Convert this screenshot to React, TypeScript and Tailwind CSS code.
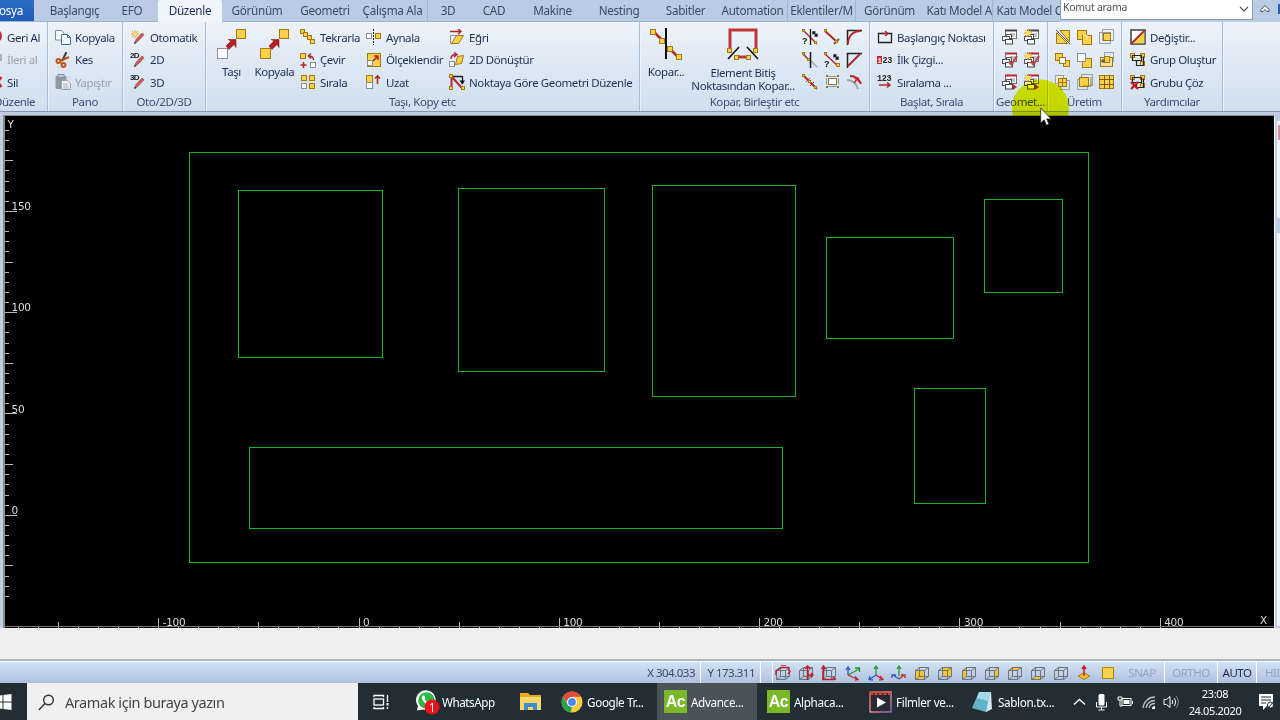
import type { ReactNode } from "react";
import clsx from "clsx";

interface Tab {
  label: string;
  width: number;
  active?: boolean;
  file?: boolean;
  divider?: boolean;
}

interface Box {
  x: number;
  y: number;
  w: number;
  h: number;
}

const TABS: Tab[] = [
  { label: "Dosya", width: 34, file: true },
  { label: "Başlangıç", width: 81 },
  { label: "EFO", width: 34 },
  { label: "", width: 9 },
  { label: "Düzenle", width: 64, active: true },
  { label: "Görünüm", width: 70 },
  { label: "Geometri", width: 66 },
  { label: "Çalışma Ala", width: 70, divider: true },
  { label: "3D", width: 40 },
  { label: "CAD", width: 52 },
  { label: "Makine", width: 65 },
  { label: "Nesting", width: 68 },
  { label: "Sabitler", width: 65 },
  { label: "Automation", width: 70, divider: true },
  { label: "Eklentiler/M", width: 68, divider: true },
  { label: "Görünüm", width: 67 },
  { label: "Katı Model A", width: 70, divider: true },
  { label: "Katı Model C", width: 67 },
];

const SHAPES: Box[] = [
  { x: 189, y: 152, w: 899, h: 410 },
  { x: 238, y: 190, w: 144, h: 167 },
  { x: 458, y: 188, w: 146, h: 183 },
  { x: 652, y: 185, w: 143, h: 211 },
  { x: 826, y: 237, w: 127, h: 101 },
  { x: 984, y: 199, w: 78, h: 93 },
  { x: 914, y: 388, w: 71, h: 115 },
  { x: 249, y: 447, w: 533, h: 81 },
];

const Y = "#fbd04a";
const YS = "#a5780f";
const R = "#b3262b";

function Icon({ size = 16, box = 16, className, children }: { size?: number; box?: number; className?: string; children: ReactNode }) {
  return (
    <svg width={size} height={size} viewBox={`0 0 ${box} ${box}`} className={clsx("shrink-0", className)} fill="none">
      {children}
    </svg>
  );
}

function Sq({ x, y, s = 5, h, fill = Y, stroke = YS }: { x: number; y: number; s?: number; h?: number; fill?: string; stroke?: string }) {
  return <rect x={x + 0.5} y={y + 0.5} width={s} height={h ?? s} fill={fill} stroke={stroke} />;
}

/* ---- edit / clipboard ---- */
const undoIcon = (
  <Icon>
    <circle cx="8" cy="7" r="7" fill="#d3222a" />
  </Icon>
);
const redoIcon = (
  <Icon>
    <path d="M14 2v6H6" stroke="#a9afb8" strokeWidth="2" />
  </Icon>
);
const deleteIcon = (
  <Icon>
    <path d="M14.500 3 11 8l3.500 5" stroke="#d3222a" strokeWidth="2.200" />
  </Icon>
);
const copyIcon = (
  <Icon>
    <path d="M.5 1.500h6l2.500 2.500v7H.5z" fill="#fff" stroke="#6d8db0" />
    <path d="M6.500 5.500h6l3 3v7h-9z" fill="#f4f9ff" stroke="#3f6f9f" />
    <path d="M12.500 5.500v3h3" stroke="#3f6f9f" />
  </Icon>
);
const cutIcon = (
  <Icon>
    <path d="M11.500 0 7 9" stroke="#4a3528" strokeWidth="2" />
    <path d="M14 5 5 9" stroke="#b4541f" strokeWidth="2" />
    <circle cx="3.500" cy="9" r="2" stroke="#c2541b" strokeWidth="2" />
    <circle cx="8.500" cy="13" r="2" stroke="#c2541b" strokeWidth="2" />
  </Icon>
);
const pasteIcon = (
  <Icon>
    <rect x=".5" y="2" width="11" height="13" rx="1" fill="#8f98a3" />
    <rect x="3" y=".5" width="6" height="3" fill="#c1c8d0" stroke="#8a929c" />
    <path d="M6.500 6.500h6l3 3v6h-9z" fill="#f0f3f7" stroke="#9aa2ac" />
    <path d="M8 10h5M8 12h6M8 14h6" stroke="#aab1ba" />
  </Icon>
);

function Pencil({ tag }: { tag?: string }) {
  return (
    <Icon className="overflow-visible">
      <path d="m4.500 14.500 1.500-4 6-6.500 2 1.800-6 6.500z" fill="#cf5a52" stroke="#a33a36" strokeWidth=".6" />
      <path d="m4 15 .8-2.600 1.700 1.500z" fill="#333" />
      {tag ? (
        <text x="0" y="6" fontSize="8" fontWeight="700" fill="#1a1a1a" fontFamily="Liberation Sans, sans-serif" letterSpacing="-.6">
          {tag}
        </text>
      ) : (
        <g>
          <path d="M5 1v8M1 5h8M2 2l6 6M8 2 2 8" stroke="#e0a51c" />
          <circle cx="5" cy="5" r="2" fill="#ffe27a" />
        </g>
      )}
    </Icon>
  );
}

/* ---- move, copy ---- */
function MoveIcon({ solid }: { solid?: boolean }) {
  return (
    <Icon size={32} box={32}>
      <Sq x={20} y={1} s={9} />
      <Sq x={1} y={20} s={10} fill={solid ? Y : "#fff"} stroke={solid ? YS : "#8a8f98"} />
      <path d="m10 18 5-5-3-1.500h8v8l-2-3-5 5z" fill="#b02027" stroke="#8b1a20" strokeWidth=".6" />
    </Icon>
  );
}

const repeatIcon = (
  <Icon>
    <Sq x={0} y={0} s={4} />
    <Sq x={3} y={3} s={4} />
    <Sq x={7} y={6} s={4} />
    <Sq x={10} y={10} s={4} />
  </Icon>
);
const rotateIcon = (
  <Icon>
    <Sq x={0} y={1} s={5} />
    <Sq x={10} y={10} s={5} fill="#fff" stroke="#8a8f98" />
    <path d="M13.500 8c0-3-2-4-5-4M11 1.500 8.500 4 11 6.500" stroke={R} strokeWidth="1.500" />
    <path d="M3.500 10v6M.5 13h6" stroke={R} strokeWidth="1.500" />
  </Icon>
);
const arrayIcon = (
  <Icon>
    <Sq x={1} y={1} />
    <Sq x={9} y={1} />
    <Sq x={1} y={9} fill="#fff" stroke="#8a8f98" />
    <Sq x={9} y={9} />
  </Icon>
);
const mirrorIcon = (
  <Icon>
    <Sq x={0} y={4} s={5} fill="#fff" stroke="#8a8f98" />
    <Sq x={9} y={4} s={5} />
    <path d="M7.500 0v16" stroke="#222" strokeDasharray="2 1" />
  </Icon>
);
const scaleIcon = (
  <Icon>
    <Sq x={1} y={1} s={13} />
    <Sq x={1} y={8} s={5} fill="#fff" stroke="#8a8f98" />
    <path d="m7 9 5-5M8 4h4v4" stroke={R} strokeWidth="1.600" />
  </Icon>
);
const extendIcon = (
  <Icon>
    <Sq x={0} y={1} s={6} h={8} />
    <Sq x={0} y={8} s={6} fill="#fff" stroke="#8a8f98" />
    <path d="M11.500 10V2M9 4.500 11.500 2 14 4.500" stroke={R} strokeWidth="1.600" />
  </Icon>
);
const skewIcon = (
  <Icon>
    <path d="M1.500 14.500v-8h6M1.500 14.500h7" stroke="#8a8f98" />
    <path d="m2.500 14.500 5-8h7l-5 8z" fill={Y} stroke={YS} />
    <path d="M1 2.500h10M9 0l3 2.500L9 5" stroke={R} strokeWidth="1.500" />
  </Icon>
);
const transformIcon = (
  <Icon>
    <Sq x={0} y={9} s={5} fill="#fff" stroke="#8a8f98" />
    <path d="m8.500 4.500 6-1-2 8-6 1z" fill={Y} stroke={YS} />
    <path d="M2 7c0-3 2-4.500 5-4.500M5 .5l3 2-3 2.500" stroke={R} strokeWidth="1.500" />
  </Icon>
);
const editPointIcon = (
  <Icon>
    <path d="M2.500 14V2.500l10 11" stroke={R} strokeWidth="2" />
    <path d="M3 2.500h10M13.500 2v8" stroke="#222" strokeWidth="1.300" />
    <path d="M10.500 6.500h5.500l-2.700 4z" fill="#111" />
    <Sq x={0} y={0} s={3} />
    <Sq x={0} y={12} s={3} />
    <Sq x={12} y={12} s={3} />
  </Icon>
);

/* ---- break, join ---- */
const breakIcon = (
  <Icon size={32} box={32}>
    <path d="m4 4 8 8M20 21l8 8" stroke={R} strokeWidth="2.500" />
    <path d="M16 0v31" stroke="#111" strokeWidth="2" />
    <Sq x={0} y={1} />
    <Sq x={9} y={10} />
    <Sq x={17} y={18} />
    <Sq x={26} y={26} />
  </Icon>
);
const breakEndIcon = (
  <Icon size={32} box={32}>
    <path d="M3 21V2h26v19" stroke="#c0353a" strokeWidth="3" />
    <path d="M10 29h12" stroke="#c0353a" strokeWidth="3" />
    <path d="M1 31 12 19M20 19l11 12" stroke="#111" strokeWidth="1.600" />
    <Sq x={0} y={20} s={4} />
    <Sq x={26} y={20} s={4} />
    <Sq x={7} y={27} s={4} />
    <Sq x={19} y={27} s={4} />
  </Icon>
);
const JOIN_ICONS = [
  <Icon key="a">
    <path d="m1 1 14 14" stroke={R} strokeWidth="1.500" />
    <path d="M8.500 0v16M11 3l4 4M11 5.500V3h2.500M15 4.500V7h-2.500" stroke="#111" strokeWidth="1.300" />
    <Sq x={0} y={0} s={2} />
    <Sq x={12} y={12} s={2} />
    <text x="0" y="15" fontSize="9" fontWeight="700" fill="#111" fontFamily="Liberation Sans, sans-serif">?</text>
  </Icon>,
  <Icon key="b">
    <path d="m1 2 12 11" stroke={R} strokeWidth="2" />
    <path d="m10 15 5-5" stroke="#7b5a12" strokeWidth="2" />
    <Sq x={0} y={0} s={2} />
    <Sq x={11} y={11} s={2} />
  </Icon>,
  <Icon key="c">
    <path d="M1.500 16V1.500H16" stroke="#222" strokeWidth="1.500" />
    <path d="M2 15C2 7 7 2 15 2" stroke={R} strokeWidth="1.800" />
  </Icon>,
  <Icon key="d">
    <path d="m1 2 6 6" stroke={R} strokeWidth="1.600" />
    <path d="m9 9 6 6" stroke="#a5abb3" strokeWidth="1.600" />
    <path d="M8.500 0v16" stroke="#111" strokeWidth="1.500" />
    <Sq x={0} y={0} s={2} />
    <Sq x={5} y={6} s={2} />
  </Icon>,
  <Icon key="e">
    <path d="m1 2 13 12" stroke={R} strokeWidth="1.500" />
    <path d="m10 3 4 4M10 5.500V3h2.500M14 4.500V7h-2.500" stroke="#111" strokeWidth="1.300" />
    <Sq x={0} y={0} s={2} />
    <Sq x={12} y={11} s={3} />
    <text x="0" y="15" fontSize="9" fontWeight="700" fill="#111" fontFamily="Liberation Sans, sans-serif">?</text>
  </Icon>,
  <Icon key="f">
    <path d="M1.500 16V1.500H16" stroke="#222" strokeWidth="1.500" />
    <path d="M2 14 14 2" stroke={R} strokeWidth="2" />
  </Icon>,
  <Icon key="g">
    <path d="m1 1 14 14" stroke={R} strokeWidth="2" />
    <path d="m4 8 4-4M8 12l4-4" stroke={R} />
    <Sq x={0} y={0} s={2} />
    <Sq x={6} y={6} s={2} />
    <Sq x={12} y={12} s={2} />
  </Icon>,
  <Icon key="h">
    <path d="M4.500 2.500h8M4.500 12.500h8M2.500 4.500v6M14.500 4.500v6" stroke="#8d939b" />
    <rect x="4.500" y="4.500" width="8" height="6" fill="#fff" stroke="#927330" />
    <path d="M2 2h2M13 2h2M2 13h2M13 13h2" stroke="#927330" strokeWidth="2" />
  </Icon>,
  <Icon key="i">
    <path d="M1 6c6 0 9 3 11 9" stroke="#9ea4ad" strokeWidth="2" />
    <path d="M4 2c6 0 9 3 11 8" stroke={R} strokeWidth="2" />
    <path d="m8 9 4-5M8.500 4.500 12 4l.5 4" stroke="#d3222a" strokeWidth="1.500" />
  </Icon>,
];

/* ---- start, order ---- */
const startIcon = (
  <Icon>
    <path d="M1.500 4.500h13v9h-13z" stroke="#222" strokeWidth="1.300" />
    <path d="M5 4.500h5M8 2l3 2.500L8 7" stroke={R} strokeWidth="1.300" />
  </Icon>
);
const firstLineIcon = (
  <Icon className="overflow-visible">
    <rect x="0" y="4" width="5" height="8" fill="#c9252c" />
    <text x=".3" y="11" fontSize="8" fontWeight="700" fill="#fff" fontFamily="Liberation Mono, monospace">1</text>
    <text x="5.500" y="11" fontSize="8.500" fontWeight="700" fill="#222" fontFamily="Liberation Mono, monospace">23</text>
  </Icon>
);
const orderIcon = (
  <Icon className="overflow-visible">
    <text x="0" y="7" fontSize="8.500" fontWeight="700" fill="#222" fontFamily="Liberation Mono, monospace">123</text>
    <path d="M2 11h10M10 8.500l3 2.500-3 2.500" stroke={R} strokeWidth="1.500" />
  </Icon>
);

/* ---- geometry layers ---- */
function LayerIcon({ star, mark }: { star?: boolean; mark?: "check" | "next" }) {
  return (
    <Icon>
      <rect x="3.500" y="1.500" width="11" height="8" fill="#fff" stroke="#6b6f76" />
      <path d="M3 1.500h12" stroke={mark ? R : "#444"} strokeWidth="2" />
      <path d="M8 5h5M8 7h5" stroke="#888" />
      <rect x="4.500" y="5.500" width="5" height="4" fill="#fff" stroke="#555" />
      <rect x=".5" y="7.500" width="7" height="4" fill="#fff" stroke="#555" />
      <rect x="3.500" y="10.500" width="7" height="4.500" fill="#fff" stroke="#444" />
      {star && (
        <g>
          <path d="M4 0v8M0 4h8M1 1l6 6M7 1 1 7" stroke="#d99b16" />
          <circle cx="4" cy="4" r="2.500" fill="#ffdc62" />
        </g>
      )}
      {mark === "check" && <path d="m7 10 2.500 2.500L15 4" stroke="#c5474a" strokeWidth="2.200" />}
      {mark === "next" && <path d="m11 10 4 3-4 3z" fill="#c02a30" />}
    </Icon>
  );
}

/* ---- production ---- */
const PROD_ICONS = [
  <Icon key="a">
    <path d="M1.500 14.500v-11l11 11zM5 1.500h9.500V13z" fill={Y} stroke={YS} />
    <path d="m1 1 14 14" stroke="#555" />
  </Icon>,
  <Icon key="b">
    <Sq x={0} y={1} s={9} />
    <Sq x={5} y={6} s={9} />
    <path d="M6 6.500h4v4" stroke="#fff3b5" />
  </Icon>,
  <Icon key="c">
    <Sq x={3} y={0} s={11} fill="#eef3f8" stroke="#9aa0a8" />
    <Sq x={0} y={3} s={11} fill="none" stroke="#9aa0a8" />
    <Sq x={4} y={4} s={7} />
  </Icon>,
  <Icon key="d">
    <Sq x={0} y={1} s={7} />
    <Sq x={8} y={8} s={6} />
    <Sq x={4} y={5} s={6} fill="#fff" />
  </Icon>,
  <Icon key="e">
    <Sq x={5} y={6} s={9} />
    <Sq x={0} y={1} s={8} fill="#f8fafc" stroke="#8a9098" />
  </Icon>,
  <Icon key="f">
    <Sq x={5} y={0} s={9} fill="none" stroke="#9aa0a8" />
    <Sq x={1} y={5} s={12} h={9} fill="#f5e2a0" />
    <Sq x={5} y={4} s={5} h={6} />
    <path d="M2 9h4M4 7v4" stroke="#333" />
  </Icon>,
  <Icon key="g">
    <Sq x={0} y={1} s={8} fill="#f5ecd0" stroke="#9aa0a8" />
    <Sq x={5} y={6} s={9} fill="none" stroke="#9aa0a8" />
    <Sq x={3} y={4} s={8} />
    <path d="M7.500 4v8M3 8.500h9" stroke={YS} />
  </Icon>,
  <Icon key="h">
    <Sq x={4} y={0} s={11} fill="none" stroke="#9aa0a8" />
    <Sq x={0} y={5} s={10} fill="none" stroke="#9aa0a8" />
    <Sq x={2} y={3} s={9} />
    <path d="M14 3v9H6" stroke={YS} />
  </Icon>,
  <Icon key="i">
    <Sq x={0} y={1} s={14} h={13} />
    <path d="M5.500 1v14M10.500 1v14M0 5.500h15M0 10.500h15" stroke="#7d5a0c" />
  </Icon>,
];

/* ---- helpers ---- */
const changeIcon = (
  <Icon>
    <rect x="1" y="1" width="14" height="14" fill="#fff" stroke="#222" strokeWidth="1.300" />
    <path d="M14.300 2v12.300H2z" fill={Y} />
    <path d="M1 15 15 1" stroke={R} strokeWidth="1.800" />
  </Icon>
);
function GroupIcon({ remove }: { remove?: boolean }) {
  return (
    <Icon>
      <Sq x={0} y={1} s={4} />
      <Sq x={10} y={1} s={4} />
      <Sq x={10} y={9} s={4} />
      <path d="M2.500 3.500h9v5h-9zM6.500 8.500v5h7v-9" stroke="#222" strokeWidth="1.200" />
      {remove && <path d="m1 8 7 7M8 8l-7 7" stroke="#c8161d" strokeWidth="2.200" />}
    </Icon>
  );
}

function Item({ icon, label, disabled }: { icon: ReactNode; label: string; disabled?: boolean }) {
  return (
    <div className={clsx("flex h-[22.5px] items-center gap-1 whitespace-nowrap", disabled && "text-[#9aa3b0]")}>
      {icon}
      <span className="pt-px">{label}</span>
    </div>
  );
}

function Group({ title, width, className, titleClass, children }: { title: string; width: string; className?: string; titleClass?: string; children: ReactNode }) {
  return (
    <div className={clsx("flex h-[89px] shrink-0 flex-col border-r border-[#a9bdd6] pt-1 shadow-[1px_0_0_#eef4fb]", width)}>
      <div className={clsx("flex h-[68px]", className)}>{children}</div>
      <div className={clsx("flex h-[16px] items-center justify-center whitespace-nowrap text-[#3e4f70]", titleClass)}>{title}</div>
    </div>
  );
}

function Tabs() {
  return (
    <div className="flex h-[22px] bg-[#b9cce4] text-[11.700px] text-[#3a4a68]">
      {TABS.map((tab, i) => (
        <div
          key={i}
          style={{ width: tab.width }}
          className={clsx(
            "flex h-[22px] shrink-0 items-center overflow-hidden whitespace-nowrap border-b pb-[2px]",
            tab.label.startsWith("Katı") ? "justify-start pl-[3.500px]" : "justify-center",
            tab.divider && "border-r border-r-[#9fb4d0]",
            tab.file && "justify-end! border-b-[#1c4f9c] bg-linear-to-b from-[#2b6cc4] to-[#1d5cb8] pr-[11px] text-white",
            tab.active ? "rounded-t-xs border-b-[#f0f5fb] bg-[#f0f5fb] text-[#1e2f55]" : "border-b-[#9fb5d2]",
          )}
        >
          {tab.label}
        </div>
      ))}
      <div className="flex h-[20px] w-[193px] items-start justify-between border border-t-0 border-[#8c9cb4] bg-white pl-[2px] pr-[3px] text-[10.500px] leading-[14px] text-[#555]">
        <span>Komut arama</span>
        <svg width="10" height="18" viewBox="0 0 10 18" fill="none">
          <path d="m1 7 4 4 4-4" stroke="#555" strokeWidth="1.200" />
        </svg>
      </div>
      <div className="flex flex-1 items-center justify-between overflow-hidden pb-1 pl-[7px]">
        <svg width="10" height="10" viewBox="0 0 10 10" className="shrink-0" fill="none">
          <path d="m1 5.500 4-4 4 4v2H7L5 5.500 3 7.500H1z" fill="#fff" stroke="#3f4c60" />
        </svg>
        <svg width="2" height="10" className="shrink-0">
          <rect width="2" height="10" fill="#2a62b5" />
        </svg>
      </div>
    </div>
  );
}

function Ribbon() {
  return (
    <div className="flex h-[89px] bg-linear-to-b from-[#edf3fa] via-[#dde8f4] to-[#d0dfef] text-[11.500px] tracking-[-0.400px] text-[#1e2f55]">
      <Group title="Düzenle" width="w-[48px]" titleClass="mr-[18px]">
        <div className="-ml-[13px]">
          <Item icon={undoIcon} label="Geri Al" />
          <Item icon={redoIcon} label="İleri al" disabled />
          <Item icon={deleteIcon} label="Sil" />
        </div>
      </Group>
      <Group title="Pano" width="w-[75px]" className="pl-[7px]">
        <div>
          <Item icon={copyIcon} label="Kopyala" />
          <Item icon={cutIcon} label="Kes" />
          <Item icon={pasteIcon} label="Yapıştır" disabled />
        </div>
      </Group>
      <Group title="Oto/2D/3D" width="w-[83px]" className="pl-[7px]">
        <div>
          <Item icon={<Pencil />} label="Otomatik" />
          <Item icon={<Pencil tag="2D" />} label="2D" />
          <Item icon={<Pencil tag="3D" />} label="3D" />
        </div>
      </Group>
      <Group title="Taşı, Kopy etc" width="w-[434px]" className="pl-1">
        <div className="flex w-[43px] flex-col items-center pt-[2px]">
          <MoveIcon />
          <span className="mt-1">Taşı</span>
        </div>
        <div className="flex w-[43px] flex-col items-center pt-[2px]">
          <MoveIcon solid />
          <span className="mt-1">Kopyala</span>
        </div>
        <div className="w-[67px] pl-1">
          <Item icon={repeatIcon} label="Tekrarla" />
          <Item icon={rotateIcon} label="Çevir" />
          <Item icon={arrayIcon} label="Sırala" />
        </div>
        <div className="w-[83px] pl-[3px]">
          <Item icon={mirrorIcon} label="Aynala" />
          <Item icon={scaleIcon} label="Ölçeklendir" />
          <Item icon={extendIcon} label="Uzat" />
        </div>
        <div className="pl-[3px]">
          <Item icon={skewIcon} label="Eğri" />
          <Item icon={transformIcon} label="2D Dönüştür" />
          <Item icon={editPointIcon} label="Noktaya Göre Geometri Düzenle" />
        </div>
      </Group>
      <Group title="Kopar, Birleştir etc" width="w-[230px]">
        <div className="flex w-[52px] flex-col items-center pt-[2px]">
          {breakIcon}
          <span className="mt-1">Kopar...</span>
        </div>
        <div className="flex w-[102px] flex-col items-center whitespace-nowrap pt-[2px] leading-[13px]">
          {breakEndIcon}
          <span className="mt-[6px]">Element Bitiş</span>
          <span>Noktasından Kopar...</span>
        </div>
        <div className="grid auto-rows-[22.500px] grid-cols-3 content-start items-center gap-x-[6px] pl-[8px]">{JOIN_ICONS}</div>
      </Group>
      <Group title="Başlat, Sırala" width="w-[124px]" className="pl-[7px]">
        <div>
          <Item icon={startIcon} label="Başlangıç Noktası" />
          <Item icon={firstLineIcon} label="İlk Çizgi..." />
          <Item icon={orderIcon} label="Sıralama ..." />
        </div>
      </Group>
      <Group title="Geomet..." width="w-[54px]" className="pl-[8px]">
        <div className="grid auto-rows-[22.500px] grid-cols-2 content-start items-center gap-x-[6px]">
          <LayerIcon />
          <LayerIcon star />
          <LayerIcon mark="check" />
          <LayerIcon star mark="check" />
          <LayerIcon mark="next" />
          <LayerIcon star mark="next" />
        </div>
      </Group>
      <Group title="Üretim" width="w-[74px]" className="pl-[7px]">
        <div className="grid auto-rows-[22.500px] grid-cols-3 content-start items-center gap-x-[6px]">{PROD_ICONS}</div>
      </Group>
      <Group title="Yardımcılar" width="w-[101px]" className="pl-[8px]">
        <div>
          <Item icon={changeIcon} label="Değiştir..." />
          <Item icon={<GroupIcon />} label="Grup Oluştur" />
          <Item icon={<GroupIcon remove />} label="Grubu Çöz" />
        </div>
      </Group>
    </div>
  );
}

// Drawing area, in window pixels; 0,0 of the model is at 358.5,515.3
function Drawing() {
  const yTicks = Array.from({ length: 47 }, (_, i) => i - 8);
  const xTicks = Array.from({ length: 58 }, (_, i) => i - 17);
  return (
    <svg width="1269" height="512" viewBox="5 116 1269 512" className="block bg-black" shapeRendering="crispEdges">
      <g stroke="#b9b9b9">
        {yTicks.map((t) => {
          const y = Math.round(514.8 - t * 10.13) + 0.5;
          return y > 130 ? <path key={t} d={`M5 ${y}h${t % 10 === 0 ? 12 : t % 5 === 0 ? 8 : 4}`} /> : null;
        })}
        {xTicks.map((t) => {
          const x = Math.round(358.5 + t * 20.03) + 0.5;
          return x < 1225 ? <path key={t} d={`M${x} 628v-${t % 10 === 0 ? 10 : t % 5 === 0 ? 6 : 2}`} /> : null;
        })}
        <path d="M5 626.500h1269" stroke="#777" />
      </g>
      <g fill="none" stroke="#1cb026">
        {SHAPES.map((s, i) => (
          <rect key={i} x={s.x + 0.5} y={s.y + 0.5} width={s.w} height={s.h} />
        ))}
      </g>
      <g fill="#dedede" fontSize="10.500" fontFamily="DejaVu Sans, sans-serif">
        <text x="7.500" y="128">Y</text>
        {[150, 100, 50, 0].map((v) => (
          <text key={v} x="11.500" y={514 - v * 2.026}>{v}</text>
        ))}
        {[-100, 0, 100, 200, 300, 400].map((v) => (
          <text key={v} x={363 + v * 2.003} y="626">{v}</text>
        ))}
        <text x="1260" y="624">X</text>
      </g>
    </svg>
  );
}

type Face = "left" | "right" | "top" | "bottom" | "front" | "back" | "none";

const FACES: Record<Face, string> = {
  front: "M1.500 5.500h9v9h-9z",
  back: "M5.500 2.500h9v9h-9z",
  left: "M1.500 5.500l4-3v9l-4 3z",
  right: "M10.500 5.500l4-3v9l-4 3z",
  top: "M1.500 5.500l4-3h9l-4 3z",
  bottom: "M1.500 14.500l4-3h9l-4 3z",
  none: "",
};

function Cube({ face, red }: { face: Face; red?: string }) {
  return (
    <Icon>
      {FACES[face] && <path d={FACES[face]} fill="#f7c52c" />}
      <path d="M1.500 5.500h9v9h-9zM5.500 2.500h9v9h-9zM1.500 5.500l4-3M10.500 5.500l4-3M1.500 14.500l4-3M10.500 14.500l4-3" stroke="#6d737c" />
      {red && <path d={red} stroke="#c01f27" strokeWidth="1.500" />}
    </Icon>
  );
}

function Axes({ x, y, z }: { x: string; y: string; z: string }) {
  return (
    <Icon>
      <path d={y} stroke="#1f9a37" strokeWidth="1.300" />
      <path d={x} stroke="#c0272d" strokeWidth="1.300" />
      <path d={z} stroke="#2f55c8" strokeWidth="1.300" />
    </Icon>
  );
}

function StatusBar() {
  return (
    <div className="flex h-[22px] items-center border-t border-[#eef4fb] bg-linear-to-b from-[#d3e2f4] to-[#aec1dc] text-[11.500px] tracking-[-0.500px] text-[#3b4a66]">
      <div className="flex h-full w-[701px] items-center justify-end border-r border-white pr-[5px]">X 304.033</div>
      <div className="flex h-full w-[60px] items-center justify-end border-r border-white pr-[5px]">Y 173.311</div>
      <div className="h-full w-[12px] border-r border-white" />
      <div className="flex w-[347px] items-center gap-[7.200px] pl-[2px]">
        <Cube face="none" red="M1 6l5-3.500h8M6 0h5M13 4l2 2.500L13 9M1 5v5" />
        <Cube face="none" red="M9.500 15V2M7 4l2.500-3L12 4M9 10h6M13 8l2 2-2 2" />
        <Cube face="none" red="M2.500 15V2M.5 4l2-3 2 3M1 14.500h13M12 12l3 2.500" />
        <Axes y="m3 10 11-6M10 3h4.500v4" x="m3 10 9 4M10 11.500l3 3-3 .5" z="M3 10V3M1 5l2-3 2 3" />
        <Axes y="M8 10V2M6 4l2-3 2 3" x="m8 10 6 4M12 11l3 3.500-4 .5" z="m8 10-6 4M2 11l-1 3.500 4 .5" />
        <Axes y="M8 11V2M6 4l2-3 2 3" x="m8 14 5-4M10 10h4v3" z="m8 14-6-4M1 13v-3h4" />
        <Cube face="front" />
        <Cube face="back" />
        <Cube face="left" />
        <Cube face="right" />
        <Cube face="top" />
        <Cube face="bottom" />
        <Cube face="none" />
        <Icon>
          <path d="m2 11 6-3 6 3-6 3.500z" fill="#f7c52c" stroke="#a5780f" />
          <path d="M8 11V2M6 4l2-3 2 3" stroke="#c01f27" strokeWidth="1.500" />
        </Icon>
        <Icon>
          <rect x="2.500" y="2.500" width="11" height="11" fill="#fbd04a" stroke="#b5860e" />
        </Icon>
      </div>
      <div className="flex h-full w-[45px] items-center justify-center border-r border-white text-[#94a5bf]">SNAP</div>
      <div className="flex h-full w-[53px] items-center justify-center border-r border-white text-[#94a5bf]">ORTHO</div>
      <div className="flex h-full w-[39px] items-center justify-center border-r border-white text-[#1b2c58]">AUTO</div>
      <div className="flex h-full flex-1 items-center overflow-hidden pl-[8px] text-[#94a5bf]">HIDE</div>
    </div>
  );
}

function AcIcon() {
  return <div className="flex size-[23px] shrink-0 items-center justify-center bg-[#79b928] font-['Liberation_Sans',sans-serif] text-[16px] font-bold tracking-[-0.500px] text-white">Ac</div>;
}

function Task({ icon, label, width, active, className }: { icon: ReactNode; label?: string; width: string; active?: boolean; className?: string }) {
  return (
    <div className={clsx("flex h-full shrink-0 items-center gap-1 whitespace-nowrap", width, active && "bg-[#4a5458]", className)}>
      {icon}
      {label && <span>{label}</span>}
    </div>
  );
}

function Taskbar() {
  return (
    <div className="flex h-[37px] bg-[#222e33] text-[11.700px] tracking-[-0.350px] text-white">
      <div className="flex w-[27px] items-center">
        <svg width="12" height="16" viewBox="0 0 12 16">
          <path d="M0 1.500 2.500 1v6.500H0zM3.500 1 11.500 0v7.500h-8zM0 8.500h2.500V15L0 14.500zM3.500 8.500h8V16l-8-1z" fill="#fff" />
        </svg>
      </div>
      <div className="flex w-[331px] items-center bg-[#f0f0f0] pl-[11px] pt-px text-[14.500px] tracking-[-0.420px] text-[#444]">
        <svg width="17" height="17" viewBox="0 0 17 17" fill="none" className="mr-[10px]">
          <circle cx="10.500" cy="6" r="4.800" stroke="#333" strokeWidth="1.400" />
          <path d="M7 9.500.8 16" stroke="#333" strokeWidth="1.400" />
        </svg>
        Aramak için buraya yazın
      </div>
      <Task
        width="w-[57px]"
        className="pl-[15px]"
        icon={
          <Icon>
            <path d="M1 3V1.500h9.500V3M1 13v1.500h9.500V13" stroke="#fff" strokeWidth="1.300" />
            <rect x="1" y="5" width="9.500" height="6" stroke="#fff" strokeWidth="1.300" />
            <path d="M14.500 1v7M14.500 13v2" stroke="#fff" strokeWidth="1.300" />
            <rect x="13.500" y="9" width="2" height="2.500" fill="#fff" />
          </Icon>
        }
      />
      <Task
        width="w-[105px]"
        className="gap-px! tracking-[-0.450px]"
        label="WhatsApp"
        icon={
          <svg width="26" height="26" viewBox="0 0 26 26" className="shrink-0">
            <path d="M2 21.500 3 17A9.800 9.800 0 1 1 8 20.500z" fill="#fff" />
            <circle cx="11.500" cy="11.500" r="8.300" fill="#2fb843" />
            <path d="M7.500 7c2-1.500 2.500 1 2.500 2s-1 1 0 2 2 2 3 1.500 3 .5 2 2-4 1-6-1.500-3-4.500-1.500-6" fill="#fff" />
            <circle cx="17" cy="18" r="7.500" fill="#e8131b" />
            <text x="17" y="22.500" textAnchor="middle" fontSize="12" fill="#fff" fontFamily="Open Sans, sans-serif">1</text>
          </svg>
        }
      />
      <Task
        width="w-[41px]"
        icon={
          <svg width="21" height="19" viewBox="0 0 21 19">
            <path d="M0 1h8l2 2h11v14H0z" fill="#e7a927" />
            <path d="M0 5h21v13H0z" fill="#fbd766" />
            <path d="M4 18v-7h13v7h-4v-3H8v3z" fill="#3a8fd0" />
          </svg>
        }
      />
      <Task
        width="w-[96px]"
        label="Google Tr..."
        icon={
          <svg width="22" height="22" viewBox="0 0 22 22" className="shrink-0">
            <circle cx="11" cy="11" r="10.500" fill="#fccb3b" />
            <path d="M1.900 5.700A10.500 10.500 0 0 1 20.100 5.700H11L7 13z" fill="#df4b3c" />
            <path d="M1.900 5.700 6.800 14l4.200 2-1.500 5.400A10.500 10.500 0 0 1 1.900 5.700z" fill="#27a055" />
            <circle cx="11" cy="11" r="5" fill="#fff" />
            <circle cx="11" cy="11" r="3.900" fill="#4a87ee" />
          </svg>
        }
      />
      <Task width="w-[100px]" className="pl-[7px]" active label="Advance..." icon={<AcIcon />} />
      <Task width="w-[112px]" className="pl-[10px]" label="Alphaca..." icon={<AcIcon />} />
      <Task
        width="w-[103px]"
        label="Filmler ve..."
        icon={
          <svg width="23" height="22" viewBox="0 0 23 22" fill="none" className="shrink-0">
            <defs>
              <linearGradient id="film" x1="0" y1="0" x2="1" y2="1">
                <stop offset="0" stopColor="#e8574a" />
                <stop offset=".5" stopColor="#d98a9a" />
                <stop offset="1" stopColor="#8b62b8" />
              </linearGradient>
            </defs>
            <rect x="1" y="1" width="21" height="20" fill="#2a2830" stroke="url(#film)" strokeWidth="1.500" />
            <path d="M1 2.500h21" stroke="#c9463f" strokeWidth="3" strokeDasharray="3 1.500" />
            <path d="m8 6.500 9 5-9 5z" fill="#fff" />
          </svg>
        }
      />
      <Task
        width="w-[96px]"
        className="gap-[5px]!"
        label="Sablon.tx..."
        icon={
          <svg width="21" height="22" viewBox="0 0 21 22" className="shrink-0">
            <path d="M7 1h12l1 17-6 3z" fill="#d7e6ea" />
            <path d="M7 1h11l-4 20L0 17z" fill="#5fb4c9" />
            <path d="M7 1h11l-2 9-11-3z" fill="#a6dbe6" />
          </svg>
        }
      />
      <div className="flex w-[114px] items-center gap-[9px] pl-[5px]">
        <svg width="13" height="16" viewBox="0 0 13 16" fill="none">
          <path d="m1 10.500 5.500-5 5.500 5" stroke="#fff" strokeWidth="1.400" />
        </svg>
        <svg width="13" height="18" viewBox="0 0 13 18" fill="none">
          <rect x="3.500" y="1" width="6" height="11.500" rx="1.500" fill="#fff" />
          <path d="M1.500 9v5h10V9M6.500 14v3M3.500 17h6" stroke="#fff" />
        </svg>
        <svg width="16" height="14" viewBox="0 0 16 14" fill="none">
          <path d="M15.500 6v3M1 2h4v3H1zM3 5v6h2" stroke="#fff" />
          <rect x="5" y="3.500" width="9" height="7" stroke="#fff" />
          <rect x="6.500" y="5" width="6" height="4" fill="#fff" />
        </svg>
        <svg width="14" height="16" viewBox="0 0 14 16" fill="none">
          <path d="M1 14A12 12 0 0 1 13 3M4 14a9 9 0 0 1 9-7.500M7 14a6 6 0 0 1 6-4.500" stroke="#b9bfc2" strokeWidth="1.300" />
          <path d="M10 15a3 3 0 0 1 3-3v3z" fill="#fff" />
        </svg>
        <svg width="16" height="16" viewBox="0 0 16 16" fill="none" className="-ml-[2px]">
          <path d="M1 5.500h2.500L7 2.500v11l-3.500-3H1z" stroke="#fff" />
          <path d="M9 6c1 1.200 1 2.800 0 4M11 4c2 2.300 2 5.700 0 8" stroke="#fff" />
          <path d="M13 2c3 3.500 3 8.500 0 12" stroke="#87909a" />
        </svg>
      </div>
      <div className="flex w-[64px] flex-col items-center justify-center pl-[2px] text-[11px] leading-[17px]">
        <span>23:08</span>
        <span>24.05.2020</span>
      </div>
      <div className="flex items-center pl-[12px]">
        <svg width="17" height="18" viewBox="0 0 17 18" fill="none">
          <path d="M1 1h14v12H9l-4 4v-4H1z" fill="#fff" />
          <path d="M3 4h10M3 7h10M3 10h5" stroke="#222e33" />
          <circle cx="12.500" cy="12" r="3" fill="#fff" stroke="#222e33" />
          <path d="m11 14 3.500-4" stroke="#222e33" />
        </svg>
      </div>
    </div>
  );
}

function App() {
  return (
    <div className="relative flex h-[720px] w-[1280px] flex-col overflow-hidden bg-[#efefef] font-['Noto_Sans','Open_Sans',sans-serif] text-[12px] leading-[16px] tracking-[-0.300px]">
      <Tabs />
      <Ribbon />
      <div className="flex h-[517px] bg-[#bccde4]">
        <div className="w-[3px] shrink-0 border-t border-[#8296b2]" />
        <div className="w-[1272px] shrink-0 border-t border-[#8296b2]">
          <div className="mt-[3px] border-l-2 border-t border-r border-[#8b8f94] border-r-white">
            <Drawing />
          </div>
        </div>
        <div className="flex flex-1 flex-col items-end border-t border-[#8296b2] pt-[9px]">
          <div className="h-[97px] w-[3px] bg-[#eef5fd] pt-[4px]">
            <div className="ml-px h-[15px] bg-[#d98c93]" />
          </div>
          <div className="mt-[15px] h-[393px] w-[3px] bg-[#eef5fd]" />
        </div>
      </div>
      <div className="h-[31px] bg-[#efefef]" />
      <div className="h-[2px] border-y border-[#b4b8c2] bg-[#e4e6ea]" />
      <StatusBar />
      <Taskbar />

      {/* pointer with its highlight */}
      <svg width="60" height="60" viewBox="1010 76 60 60" className="absolute left-[1010px] top-[76px] mix-blend-multiply">
        <circle cx="1040.500" cy="108" r="28.500" fill="#eef400" />
      </svg>
      <svg width="12" height="20" viewBox="0 0 12 20" className="absolute left-[1040px] top-[107px]">
        <path d="M.7 1v15l3.500-3.200 2.300 5.500 2.500-1-2.300-5.300h4.500z" fill="#fff" stroke="#222" strokeWidth=".8" />
      </svg>
    </div>
  );
}

export default App;
